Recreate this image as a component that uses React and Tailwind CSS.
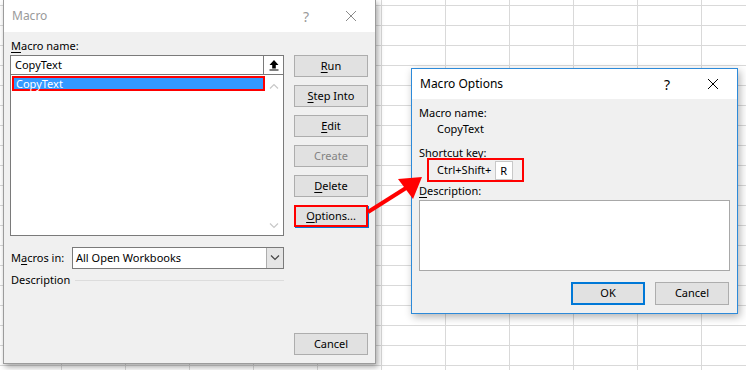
import React from "react";

const font = "font-['Segoe_UI','Noto_Sans','Liberation_Sans',sans-serif]";

const Btn = ({ children, disabled, className = "" }) => (
  <div
    className={`h-[22px] w-[74px] flex items-center justify-center bg-[#e1e1e1] border border-[#adadad] text-[11px] ${
      disabled ? "text-[#838383]" : "text-black"
    } ${className}`}
  >
    {children}
  </div>
);

const U = ({ children }) => <span className="underline underline-offset-2 decoration-1">{children}</span>;

const Chevron = ({ up, className = "" }) => (
  <svg width="10" height="6" viewBox="0 0 10 6" className={className}>
    <path d={up ? "M1 5.5L5 1.5L9 5.5" : "M1 0.5L5 4.5L9 0.5"} fill="none" stroke="currentColor" strokeWidth="1.2" />
  </svg>
);

const CloseX = ({ color }) => (
  <svg width="12" height="12" viewBox="0 0 12 12">
    <path d="M1 1L11 11M11 1L1 11" stroke={color} strokeWidth="1" />
  </svg>
);

const MacroDialog = () => (
  <div className="absolute left-[3px] top-0 w-[373px] h-[364px] bg-[#f0f0f0] border border-t-0 border-[#9c9c9c] shadow-[2px_3px_6px_rgba(0,0,0,0.35)] flex flex-col">
    <div className="h-[32px] bg-white flex items-center pl-[8px] shrink-0">
      <span className="text-[12px] text-[#9a9a9a] flex-1">Macro</span>
      <span className="text-[14px] text-[#9a9a9a] mr-[36px]">?</span>
      <div className="mr-[18px] flex items-center">
        <CloseX color="#8a8a8a" />
      </div>
    </div>
    <div className="flex flex-1 pl-[6px] pr-[7px] text-[11px]">
      <div className="w-[274px] flex flex-col">
        <div className="h-[16px] mt-[6px] leading-[16px] pl-px">
          <U>M</U>acro name:
        </div>
        <div className="flex mt-px h-[20px]">
          <div className="w-[253px] h-[20px] bg-white border border-[#7a7a7a] border-r-0 leading-[18px] pl-[4px]">CopyText</div>
          <div className="w-[21px] h-[20px] border border-[#7a7a7a] bg-white flex items-center justify-center">
            <svg width="12" height="12" viewBox="0 0 12 12">
              <path d="M6 1L1.5 6H4.2V9.5H7.8V6H10.5Z M1.5 10.5H10.5V11.6H1.5Z" fill="#000" />
            </svg>
          </div>
        </div>
        <div className="h-[161px] bg-white border border-t-0 border-[#7a7a7a] flex">
          <div className="flex-1 pt-px pl-px">
            <div className="h-[15px] bg-[#3399ff] border-2 border-[#ff0000] text-white leading-[11px] pl-[2px]">CopyText</div>
          </div>
          <div className="w-[18px] flex flex-col items-center justify-between text-[#c8c8c8] pt-[8px] pb-[6px]">
            <Chevron up />
            <Chevron />
          </div>
        </div>
        <div className="flex items-center mt-[11px] h-[22px]">
          <span className="w-[62px] pl-px">
            M<U>a</U>cros in:
          </span>
          <div className="flex-1 h-[22px] flex bg-white border border-[#7a7a7a]">
            <span className="flex-1 leading-[20px] pl-[3px]">All Open Workbooks</span>
            <div className="w-[17px] bg-[#e5e5e5] border-l border-[#adadad] flex items-center justify-center text-[#444]">
              <Chevron />
            </div>
          </div>
        </div>
        <div className="flex items-center mt-[3px] h-[16px]">
          <span className="pl-px">Description</span>
          <div className="flex-1 ml-[5px] h-px bg-[#dcdcdc]" />
        </div>
      </div>
      <div className="ml-[10px] flex flex-col pt-[23px] gap-[8px]">
        <Btn><U>R</U>un</Btn>
        <Btn><U>S</U>tep Into</Btn>
        <Btn><U>E</U>dit</Btn>
        <Btn disabled>Create</Btn>
        <Btn><U>D</U>elete</Btn>
        <Btn className="border-2 border-[#ff0000] shadow-[1px_1px_0_#0078d7]"><U>O</U>ptions...</Btn>
        <Btn className="mt-[98px]">Cancel</Btn>
      </div>
    </div>
  </div>
);

const OptionsDialog = () => (
  <div className="absolute left-[411px] top-[68px] w-[327px] h-[246px] bg-[#f0f0f0] border border-[#2d8ad9] shadow-[2px_3px_8px_rgba(0,0,0,0.3)] flex flex-col">
    <div className="h-[30px] bg-white flex items-center pl-[8px] shrink-0">
      <span className="text-[12px] text-black flex-1">Macro Options</span>
      <span className="text-[14px] text-black mr-[37px]">?</span>
      <div className="mr-[18px] flex items-center">
        <CloseX color="#000" />
      </div>
    </div>
    <div className="flex flex-col pl-[7px] pr-[7px] text-[11px]">
      <div className="h-[16px] leading-[16px] mt-[6px]">Macro name:</div>
      <div className="h-[16px] leading-[16px] pl-[18px]">CopyText</div>
      <div className="h-[16px] leading-[16px] mt-[8px]">Shortcut key:</div>
      <div className="ml-[8px] -mt-[3px] w-[97px] h-[24px] border-2 border-[#ff0000] flex items-center pl-[8px]">
        <span>Ctrl+Shift+</span>
        <div className="ml-[4px] w-[18px] h-[19px] bg-white border border-[#c8c8c8] leading-[17px] pl-[4px]">R</div>
      </div>
      <div className="h-[16px] leading-[16px] mt-px">
        <U>D</U>escription:
      </div>
      <div className="mt-px h-[71px] bg-white border border-[#a8a8a8]" />
      <div className="flex justify-end gap-[10px] mt-[11px] pr-[1px]">
        <div className="h-[23px] w-[74px] flex items-center justify-center bg-[#e1e1e1] border-2 border-[#0078d7]">OK</div>
        <div className="h-[23px] w-[74px] flex items-center justify-center bg-[#e1e1e1] border border-[#adadad]">Cancel</div>
      </div>
    </div>
  </div>
);

export default function App() {
  return (
    <div
      className={`relative w-[746px] h-[370px] overflow-hidden bg-white ${font} text-black bg-[linear-gradient(to_right,#d9d9d9_1px,transparent_1px),linear-gradient(to_bottom,#d9d9d9_1px,transparent_1px)] bg-[length:64px_20px] bg-[position:61px_5px]`}
    >
      <MacroDialog />
      <OptionsDialog />
      <svg className="absolute left-0 top-0" width="746" height="370" viewBox="0 0 746 370">
        <line x1="368" y1="212" x2="406" y2="188" stroke="#ff0000" strokeWidth="4" />
        <polygon points="422,177 398,179 413,199" fill="#ff0000" />
      </svg>
    </div>
  );
}
